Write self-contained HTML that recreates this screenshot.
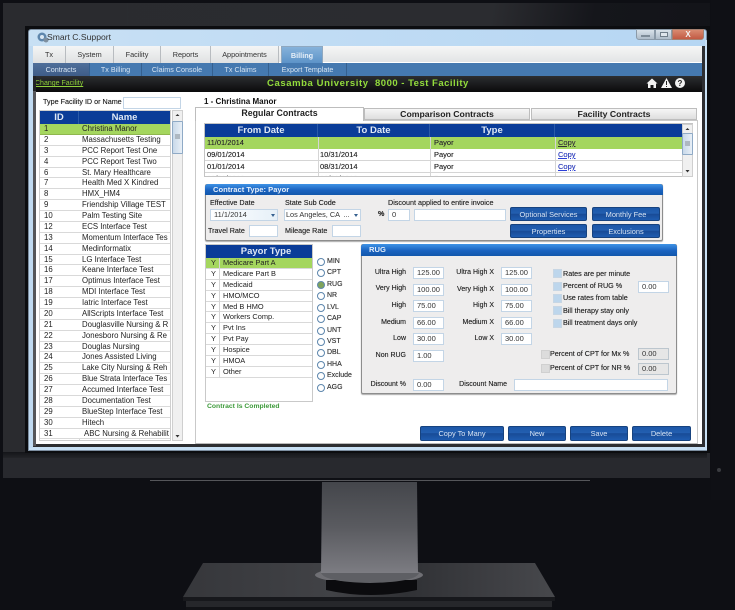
<!DOCTYPE html>
<html><head><meta charset="utf-8"><style>
html,body{margin:0;padding:0;background:#0e0f14}
#s{position:relative;width:735px;height:610px;overflow:hidden;background:#0e0f14;font-family:"Liberation Sans",sans-serif;font-size:7.8px;color:#222}
#s div,#s span.a{position:absolute;box-sizing:border-box;white-space:nowrap}
#w{filter:blur(.35px);left:0;top:0;width:735px;height:610px}
.tab{top:46px;height:17px;line-height:18px;text-align:center;background:linear-gradient(#f4f5f5,#dfe1e2);border-right:1px solid #b8bcc0;color:#333;font-size:7.3px}
.sub{top:63px;height:13px;line-height:13px;text-align:center;color:#d6e4f2;border-right:1px solid #35608f;font-size:7.2px}
.r{height:10.89px;width:100%;left:0;line-height:10px;border-bottom:1px solid #d9d9d9;background:#fff;position:relative!important}
.r span{position:absolute;top:0}
.p .r{font-size:7.4px}
.hd{background:#0a3c98;color:#dfe8f5;font-weight:bold;text-align:center;font-size:9.5px}
.pb{background:linear-gradient(#3f93e6,#1a63c0 55%,#1257ab);color:#e4eefa;font-weight:bold;line-height:11px;font-size:7.6px}
.panel{background:#eeeded;border:1px solid #8d8d8d;border-radius:2px;box-shadow:0 1px 1px #aaa}
.i{background:#fff;border:1px solid #c3d5e6;height:12px;line-height:10px;padding-left:3px;color:#333;font-size:7.5px}
.g{background:#e6e6e6;border-color:#bcc6ce}
.b{background:linear-gradient(#1c57a8,#235fb0 45%,#184b96 50%,#1e5cb0);border:1px solid #17437f;border-radius:2px;color:#d6e4f5;text-align:center;font-size:7.4px}
.l{line-height:10px;color:#222;font-size:7.2px;text-shadow:0 0 .4px #666}
.v{font-size:7.5px}
.ra{text-align:right;width:60px;font-size:7px}
.rd{left:317px;width:8px;height:8px;border:1px solid #5d86ad;border-radius:50%;background:#fff}
.rl{left:327px;line-height:10px;color:#333;font-size:7px;text-shadow:0 0 .4px #666}
.cb{width:9px;height:9px;background:#bdd6ec;border:1px solid #c7d6e4}
.sb{background:#f0f0f0;border:1px solid #cfcfcf}
.th{background:linear-gradient(90deg,#c9d9ea,#e8eff6);border:1px solid #8faac6;border-radius:1px}
</style></head><body>
<div id="s"><div id="w">
<!-- monitor -->
<div style="left:3px;top:3px;width:707px;height:475px;background:linear-gradient(100deg,#2a2b2f 0%,#2b2c30 62%,#15161b 75%,#111217 100%)"></div>
<div style="left:3px;top:453px;width:707px;height:25px;background:#28292e"></div>
<div style="left:3px;top:452px;width:704px;height:6px;background:linear-gradient(#141519,#232428)"></div>
<div style="left:150px;top:480px;width:440px;height:1px;background:#55565a"></div>
<div style="left:711px;top:0;width:24px;height:500px;background:#0f1015"></div>
<div style="left:717px;top:468px;width:4px;height:4px;border-radius:50%;background:#3a3b40"></div>
<div style="left:25px;top:26px;width:685px;height:427px;background:#0c0d10"></div>
<!-- base -->
<svg style="position:absolute;left:0;top:0" width="735" height="610">
<defs><linearGradient id="n" x1="0" y1="0" x2="0" y2="1"><stop offset="0" stop-color="#44464b"/><stop offset=".5" stop-color="#5a5b60"/><stop offset="1" stop-color="#7c7c82"/></linearGradient>
<linearGradient id="bs" x1="0" y1="0" x2="1" y2="0"><stop offset="0" stop-color="#36373b"/><stop offset=".4" stop-color="#414246"/><stop offset=".6" stop-color="#303135"/><stop offset="1" stop-color="#47484c"/></linearGradient></defs>
<polygon points="203,563 535,563 555,597 183,597" fill="url(#bs)"/>
<rect x="183" y="597" width="372" height="4" fill="#17181c"/><rect x="186" y="601" width="366" height="6" fill="#26272b"/><rect x="186" y="607" width="366" height="3" fill="#111216"/>
<ellipse cx="369" cy="575" rx="54" ry="8" fill="#6f6f74"/>
<path d="M326 580 H417 V590 Q370 600 326 590 Z" fill="#0b0b0e"/>
<polygon points="322,482 417,482 418,573 321,573" fill="url(#n)"/>
<path d="M321 573 H419 Q416 582 370 583 Q325 582 321 573 Z" fill="#5e5f64"/>
</svg>
<!-- window -->
<div style="left:28px;top:29px;width:679px;height:422px;background:linear-gradient(90deg,#c8e0f4,#b6d6f3);border:1px solid #7d8ea0;border-radius:3px 3px 0 0"></div>
<div style="left:36px;top:30px;width:14px;height:14px"><svg width="14" height="14"><circle cx="6" cy="7" r="4.5" fill="#5f87ad"/><circle cx="6" cy="7" r="2" fill="#dbe8f3"/><circle cx="10" cy="10" r="2.5" fill="#7f8f9f"/></svg></div>
<div style="left:47px;top:32px;font-size:8.6px;line-height:11px;color:#333">Smart C.Support</div>
<div style="left:636px;top:29px;width:19px;height:11px;background:linear-gradient(#d9e2ea,#aebcc9);border:1px solid #8b9aa8;border-radius:0 0 0 3px"></div>
<div style="left:641px;top:35px;width:9px;height:2px;background:#eef2f5;border:1px solid #7e8c98"></div>
<div style="left:655px;top:29px;width:17px;height:11px;background:linear-gradient(#d9e2ea,#aebcc9);border:1px solid #8b9aa8"></div>
<div style="left:660px;top:32px;width:8px;height:5px;background:#dfe6ec;border:1px solid #6f7d89"></div>
<div style="left:672px;top:29px;width:32px;height:11px;background:linear-gradient(#d98a70,#c25a43);border:1px solid #a58070;border-radius:0 0 3px 0;color:#f3f3f3;text-align:center;font-size:8px;line-height:9px;font-weight:bold">X</div>
<!-- tabs -->
<div style="left:33px;top:46px;width:671px;height:17px;background:linear-gradient(#f6f6f6,#e2e4e5);border-bottom:1px solid #fff"></div>
<div class="tab" style="left:33px;width:33px">Tx</div>
<div class="tab" style="left:66px;width:48px">System</div>
<div class="tab" style="left:114px;width:47px">Facility</div>
<div class="tab" style="left:161px;width:50px">Reports</div>
<div class="tab" style="left:211px;width:68px">Appointments</div>
<div class="tab" style="left:281px;width:42px;background:linear-gradient(#86b2da,#5d93c8);color:#e8f0f8;font-weight:bold;border:1px solid #8fa8c0;border-bottom:0">Billing</div>
<div style="left:33px;top:63px;width:671px;height:13px;background:#4579b0"></div>
<div class="sub" style="left:33px;width:57px;background:linear-gradient(#4f6f9a,#3e5c88)">Contracts</div>
<div class="sub" style="left:90px;width:52px">Tx Billing</div>
<div class="sub" style="left:142px;width:71px">Claims Console</div>
<div class="sub" style="left:213px;width:56px">Tx Claims</div>
<div class="sub" style="left:269px;width:78px">Export Template</div>
<div style="left:33px;top:76px;width:671px;height:16px;background:linear-gradient(#2c2e31,#0a0a0b)"></div>
<div style="left:35px;top:78px;line-height:11px;color:#8fd03a;text-decoration:underline;font-size:7px">Change Facility</div>
<div style="left:267px;top:78px;line-height:12px;color:#93dc3c;font-weight:bold;font-size:9.5px;letter-spacing:.6px">Casamba University</div>
<div style="left:375px;top:78px;line-height:12px;color:#93dc3c;font-weight:bold;font-size:9.5px;letter-spacing:.5px">8000 - Test Facility</div>
<svg style="position:absolute;left:646px;top:77px" width="44" height="12"><path d="M6 1.5 L11.5 6.5 H10 V11 H7.5 V8 H4.5 V11 H2 V6.5 H.5 Z" fill="#f2f2f2"/><path d="M20.5 1 L26 11 H15 Z" fill="#f4f4f4"/><rect x="20" y="4" width="1" height="4" fill="#222"/><rect x="20" y="9" width="1" height="1" fill="#222"/><circle cx="34" cy="6" r="5" fill="#f2f2f2"/><text x="34" y="9" font-size="8" font-weight="bold" text-anchor="middle" fill="#222" font-family="Liberation Sans">?</text></svg>
<!-- content -->
<div style="left:36px;top:92px;width:666px;height:352px;background:#fff"></div>
<div style="left:702px;top:46px;width:3px;height:401px;background:#2d2e31"></div>
<div style="left:33px;top:444px;width:672px;height:3px;background:#2d2e31"></div>
<div style="left:705px;top:40px;width:2px;height:410px;background:#c8e0f4"></div>
<div style="left:29px;top:447px;width:678px;height:3px;background:#c8e0f4"></div>
<div style="left:29px;top:46px;width:4px;height:402px;background:#c0daf1"></div>
<div style="left:33px;top:76px;width:3px;height:370px;background:#222326"></div>
<div style="left:33px;top:91px;width:3px;height:355px;background:#55565a"></div>
<!-- facility list -->
<div class="l" style="left:43px;top:97px">Type Facility ID or Name</div>
<div class="i" style="left:123px;top:97px;width:58px"></div>
<div style="left:39px;top:110px;width:132px;height:331px;border:1px solid #cfcfcf;overflow:hidden;background:#fff">
<div class="hd" style="left:0;top:0;width:39px;height:13px;line-height:13px;border-right:1px solid #2a5aa8">ID</div>
<div class="hd" style="left:39px;top:0;width:91px;height:13px;line-height:13px">Name</div>
<div style="left:39px;top:13px;width:1px;height:320px;background:#d5d5d5"></div>
<div style="left:0;top:13px;width:130px">
<div class="r" style="background:#a4d65e;border-bottom:1px solid #8fb64e"><span style="left:4px">1</span><span style="left:42px">Christina Manor</span></div>
<div class="r"><span style="left:4px">2</span><span style="left:42px">Massachusetts Testing</span></div>
<div class="r"><span style="left:4px">3</span><span style="left:42px">PCC Report Test One</span></div>
<div class="r"><span style="left:4px">4</span><span style="left:42px">PCC Report Test Two</span></div>
<div class="r"><span style="left:4px">6</span><span style="left:42px">St. Mary Healthcare</span></div>
<div class="r"><span style="left:4px">7</span><span style="left:42px">Health Med X Kindred</span></div>
<div class="r"><span style="left:4px">8</span><span style="left:42px">HMX_HM4</span></div>
<div class="r"><span style="left:4px">9</span><span style="left:42px">Friendship Village TEST</span></div>
<div class="r"><span style="left:4px">10</span><span style="left:42px">Palm Testing Site</span></div>
<div class="r"><span style="left:4px">12</span><span style="left:42px">ECS Interface Test</span></div>
<div class="r"><span style="left:4px">13</span><span style="left:42px">Momentum Interface Tes</span></div>
<div class="r"><span style="left:4px">14</span><span style="left:42px">Medinformatix</span></div>
<div class="r"><span style="left:4px">15</span><span style="left:42px">LG Interface Test</span></div>
<div class="r"><span style="left:4px">16</span><span style="left:42px">Keane Interface Test</span></div>
<div class="r"><span style="left:4px">17</span><span style="left:42px">Optimus Interface Test</span></div>
<div class="r"><span style="left:4px">18</span><span style="left:42px">MDI Interface Test</span></div>
<div class="r"><span style="left:4px">19</span><span style="left:42px">Iatric Interface Test</span></div>
<div class="r"><span style="left:4px">20</span><span style="left:42px">AllScripts Interface Test</span></div>
<div class="r"><span style="left:4px">21</span><span style="left:42px">Douglasville Nursing &amp; R</span></div>
<div class="r"><span style="left:4px">22</span><span style="left:42px">Jonesboro Nursing &amp; Re</span></div>
<div class="r"><span style="left:4px">23</span><span style="left:42px">Douglas Nursing</span></div>
<div class="r"><span style="left:4px">24</span><span style="left:42px">Jones Assisted Living</span></div>
<div class="r"><span style="left:4px">25</span><span style="left:42px">Lake City Nursing &amp; Reh</span></div>
<div class="r"><span style="left:4px">26</span><span style="left:42px">Blue Strata Interface Tes</span></div>
<div class="r"><span style="left:4px">27</span><span style="left:42px">Accumed Interface Test</span></div>
<div class="r"><span style="left:4px">28</span><span style="left:42px">Documentation Test</span></div>
<div class="r"><span style="left:4px">29</span><span style="left:42px">BlueStep Interface Test</span></div>
<div class="r"><span style="left:4px">30</span><span style="left:42px">Hitech</span></div>
<div class="r"><span style="left:4px">31</span><span style="left:44px">ABC Nursing &amp; Rehabilit</span></div>
</div></div>
<div class="sb" style="left:172px;top:110px;width:11px;height:331px"></div>
<div class="th" style="left:172px;top:121px;width:11px;height:33px"></div>
<svg style="position:absolute;left:172px;top:110px" width="11" height="331"><path d="M3.5 6 H7.5 L5.5 4 Z M3.5 325 H7.5 L5.5 327.5 Z" fill="#333"/><rect x="3" y="24" width="5" height="5" fill="#aeb8c2"/></svg>
<!-- main area -->
<div style="left:204px;top:97px;font-weight:bold;line-height:10px;color:#111;font-size:8px">1 - Christina Manor</div>
<div style="left:195px;top:120px;width:503px;height:324px;border:1px solid #c9c9c9;border-bottom:1px solid #bbb;background:#fff"></div>
<div style="left:195px;top:107px;width:169px;height:14px;background:#fff;border:1px solid #bdbdbd;border-bottom:0;text-align:center;font-weight:bold;font-size:8.8px;line-height:11px;color:#222">Regular Contracts</div>
<div style="left:364px;top:108px;width:166px;height:12px;background:linear-gradient(#f6f6f6,#dedede);border:1px solid #bdbdbd;text-align:center;font-weight:bold;font-size:8.7px;line-height:11px;color:#222">Comparison Contracts</div>
<div style="left:531px;top:108px;width:166px;height:12px;background:linear-gradient(#f6f6f6,#dedede);border:1px solid #bdbdbd;text-align:center;font-weight:bold;font-size:8.7px;line-height:11px;color:#222">Facility Contracts</div>
<!-- grid -->
<div style="left:204px;top:123px;width:489px;height:54px;border:1px solid #c4c4c4;overflow:hidden;background:#fff">
<div class="hd" style="left:0;top:0;width:113px;height:13px;line-height:13px;border-right:1px solid #2a5aa8">From Date</div>
<div class="hd" style="left:113px;top:0;width:112px;height:13px;line-height:13px;border-right:1px solid #2a5aa8">To Date</div>
<div class="hd" style="left:225px;top:0;width:125px;height:13px;line-height:13px;border-right:1px solid #2a5aa8">Type</div>
<div class="hd" style="left:350px;top:0;width:127px;height:13px"></div>
<div style="left:0;top:13px;width:477px;height:12px;background:#a4d65e"></div>
<div style="left:0;top:25px;width:477px;height:12px;border-bottom:1px solid #d5d5d5"></div>
<div style="left:0;top:37px;width:477px;height:12px;border-bottom:1px solid #d5d5d5"></div>
<div style="left:113px;top:13px;width:1px;height:40px;background:#d5d5d5"></div>
<div style="left:225px;top:13px;width:1px;height:40px;background:#d5d5d5"></div>
<div style="left:350px;top:13px;width:1px;height:40px;background:#d5d5d5"></div>
<div class="l v" style="left:2px;top:14px">11/01/2014</div><div class="l v" style="left:229px;top:14px">Payor</div><div class="l v" style="left:353px;top:14px;text-decoration:underline;color:#333">Copy</div>
<div class="l v" style="left:2px;top:26px">09/01/2014</div><div class="l v" style="left:115px;top:26px">10/31/2014</div><div class="l v" style="left:229px;top:26px">Payor</div><div class="l v" style="left:353px;top:26px;text-decoration:underline;color:#2b3fd8">Copy</div>
<div class="l v" style="left:2px;top:38px">01/01/2014</div><div class="l v" style="left:115px;top:38px">08/31/2014</div><div class="l v" style="left:229px;top:38px">Payor</div><div class="l v" style="left:353px;top:38px;text-decoration:underline;color:#2b3fd8">Copy</div>
<div class="l v" style="left:2px;top:50px">10/01/2013</div><div class="l v" style="left:115px;top:50px">12/31/2013</div><div class="l v" style="left:229px;top:50px">Payor</div><div class="l v" style="left:353px;top:50px;text-decoration:underline;color:#2b3fd8">Copy</div>
</div>
<div class="sb" style="left:682px;top:124px;width:11px;height:53px"></div>
<div class="th" style="left:682px;top:133px;width:11px;height:22px"></div>
<svg style="position:absolute;left:682px;top:124px" width="11" height="53"><path d="M3.5 6 H7.5 L5.5 4 Z M3.5 46 H7.5 L5.5 48.5 Z" fill="#333"/><rect x="3" y="17" width="5" height="5" fill="#aeb8c2"/></svg>
<!-- contract type -->
<div class="panel" style="left:205px;top:184px;width:458px;height:57px"></div>
<div class="pb" style="left:205px;top:184px;width:458px;height:11px;padding-left:8px;border-radius:3px 3px 0 0">Contract Type: Payor</div>
<div class="l" style="left:210px;top:198px">Effective Date</div>
<div class="i" style="left:210px;top:209px;width:68px;background:linear-gradient(90deg,#fff,#e6f0f8)">11/1/2014</div>
<div style="left:271px;top:214px;border:2px solid transparent;border-top:3px solid #35608f"></div>
<div class="l" style="left:285px;top:198px">State Sub Code</div>
<div class="i" style="left:284px;top:209px;width:77px;padding-left:1px;font-size:7.3px">Los Angeles, CA &nbsp;...</div>
<div style="left:354px;top:214px;border:2px solid transparent;border-top:3px solid #35608f"></div>
<div class="l" style="left:378px;top:209px;font-weight:bold">%</div>
<div class="i" style="left:388px;top:209px;width:22px">0</div>
<div class="i" style="left:414px;top:209px;width:92px"></div>
<div class="l" style="left:388px;top:198px">Discount applied to entire invoice</div>
<div class="l" style="left:208px;top:226px">Travel Rate</div>
<div class="i" style="left:249px;top:225px;width:29px"></div>
<div class="l" style="left:285px;top:226px">Mileage Rate</div>
<div class="i" style="left:332px;top:225px;width:29px"></div>
<div class="b" style="left:510px;top:207px;width:77px;height:14px;line-height:13px">Optional Services</div>
<div class="b" style="left:592px;top:207px;width:68px;height:14px;line-height:13px">Monthly Fee</div>
<div class="b" style="left:510px;top:224px;width:77px;height:14px;line-height:13px">Properties</div>
<div class="b" style="left:592px;top:224px;width:68px;height:14px;line-height:13px">Exclusions</div>
<!-- payor type -->
<div class="p" style="left:205px;top:244px;width:108px;height:158px;border:1px solid #c9c9c9;overflow:hidden;background:#fff">
<div class="hd" style="left:0;top:0;width:106px;height:13px;line-height:13px;padding-left:14px">Payor Type</div>
<div style="left:0;top:13px;width:106px">
<div class="r" style="background:#a4d65e"><span style="left:5px">Y</span><span style="left:17px">Medicare Part A</span></div>
<div class="r"><span style="left:5px">Y</span><span style="left:17px">Medicare Part B</span></div>
<div class="r"><span style="left:5px">Y</span><span style="left:17px">Medicaid</span></div>
<div class="r"><span style="left:5px">Y</span><span style="left:17px">HMO/MCO</span></div>
<div class="r"><span style="left:5px">Y</span><span style="left:17px">Med B HMO</span></div>
<div class="r"><span style="left:5px">Y</span><span style="left:17px">Workers Comp.</span></div>
<div class="r"><span style="left:5px">Y</span><span style="left:17px">Pvt Ins</span></div>
<div class="r"><span style="left:5px">Y</span><span style="left:17px">Pvt Pay</span></div>
<div class="r"><span style="left:5px">Y</span><span style="left:17px">Hospice</span></div>
<div class="r"><span style="left:5px">Y</span><span style="left:17px">HMOA</span></div>
<div class="r"><span style="left:5px">Y</span><span style="left:17px">Other</span></div>
</div>
<div style="left:13px;top:13px;width:1px;height:120px;background:#d5d5d5"></div>
</div>
<div class="rd" style="top:258px"></div><div class="rl" style="top:257px">MIN</div>
<div class="rd" style="top:269px"></div><div class="rl" style="top:268px">CPT</div>
<div class="rd" style="top:281px;background:#7fa35a"></div><div class="rl" style="top:280px">RUG</div>
<div class="rd" style="top:292px"></div><div class="rl" style="top:291px">NR</div>
<div class="rd" style="top:304px"></div><div class="rl" style="top:303px">LVL</div>
<div class="rd" style="top:315px"></div><div class="rl" style="top:314px">CAP</div>
<div class="rd" style="top:327px"></div><div class="rl" style="top:326px">UNT</div>
<div class="rd" style="top:338px"></div><div class="rl" style="top:337px">VST</div>
<div class="rd" style="top:349px"></div><div class="rl" style="top:348px">DBL</div>
<div class="rd" style="top:361px"></div><div class="rl" style="top:360px">HHA</div>
<div class="rd" style="top:372px"></div><div class="rl" style="top:371px">Exclude</div>
<div class="rd" style="top:384px"></div><div class="rl" style="top:383px">AGG</div>
<div style="left:207px;top:402px;line-height:10px;color:#3d9a3a;font-weight:bold;font-size:6.8px">Contract Is Completed</div>
<!-- RUG -->
<div class="panel" style="left:361px;top:244px;width:316px;height:150px"></div>
<div class="pb" style="left:361px;top:244px;width:316px;height:12px;padding-left:8px;border-radius:3px 3px 0 0">RUG</div>
<div class="l ra" style="left:346px;top:268px">Ultra High</div><div class="i" style="left:413px;top:267px;width:31px">125.00</div>
<div class="l ra" style="left:346px;top:284px">Very High</div><div class="i" style="left:413px;top:284px;width:31px">100.00</div>
<div class="l ra" style="left:346px;top:301px">High</div><div class="i" style="left:413px;top:300px;width:31px">75.00</div>
<div class="l ra" style="left:346px;top:318px">Medium</div><div class="i" style="left:413px;top:317px;width:31px">66.00</div>
<div class="l ra" style="left:346px;top:334px">Low</div><div class="i" style="left:413px;top:333px;width:31px">30.00</div>
<div class="l ra" style="left:346px;top:351px">Non RUG</div><div class="i" style="left:413px;top:350px;width:31px">1.00</div>
<div class="l ra" style="left:434px;top:268px">Ultra High X</div><div class="i" style="left:501px;top:267px;width:31px">125.00</div>
<div class="l ra" style="left:434px;top:285px">Very High X</div><div class="i" style="left:501px;top:284px;width:31px">100.00</div>
<div class="l ra" style="left:434px;top:301px">High X</div><div class="i" style="left:501px;top:300px;width:31px">75.00</div>
<div class="l ra" style="left:434px;top:318px">Medium X</div><div class="i" style="left:501px;top:317px;width:31px">66.00</div>
<div class="l ra" style="left:434px;top:334px">Low X</div><div class="i" style="left:501px;top:333px;width:31px">30.00</div>
<div class="l ra" style="left:346px;top:380px">Discount %</div><div class="i" style="left:413px;top:379px;width:31px">0.00</div>
<div class="l ra" style="left:447px;top:380px">Discount Name</div><div class="i" style="left:514px;top:379px;width:154px"></div>
<div class="cb" style="left:553px;top:269px"></div><div class="l" style="left:563px;top:269px">Rates are per minute</div>
<div class="cb" style="left:553px;top:282px"></div><div class="l" style="left:563px;top:281px">Percent of RUG %</div>
<div class="cb" style="left:553px;top:294px"></div><div class="l" style="left:563px;top:293px">Use rates from table</div>
<div class="cb" style="left:553px;top:306px"></div><div class="l" style="left:563px;top:306px">Bill therapy stay only</div>
<div class="cb" style="left:553px;top:319px"></div><div class="l" style="left:563px;top:318px">Bill treatment days only</div>
<div class="i" style="left:638px;top:281px;width:31px">0.00</div>
<div class="cb" style="left:541px;top:350px;background:#dcdcdc;border-color:#d0d0d0"></div><div class="l" style="left:550px;top:349px">Percent of CPT for Mx %</div>
<div class="cb" style="left:541px;top:364px;background:#dcdcdc;border-color:#d0d0d0"></div><div class="l" style="left:550px;top:363px">Percent of CPT for NR %</div>
<div class="i g" style="left:638px;top:348px;width:31px">0.00</div>
<div class="i g" style="left:638px;top:363px;width:31px">0.00</div>
<!-- bottom buttons -->
<div class="b" style="left:420px;top:426px;width:84px;height:15px;line-height:14px">Copy To Many</div>
<div class="b" style="left:508px;top:426px;width:58px;height:15px;line-height:14px">New</div>
<div class="b" style="left:570px;top:426px;width:58px;height:15px;line-height:14px">Save</div>
<div class="b" style="left:632px;top:426px;width:59px;height:15px;line-height:14px">Delete</div>
</div></div>
</body></html>
